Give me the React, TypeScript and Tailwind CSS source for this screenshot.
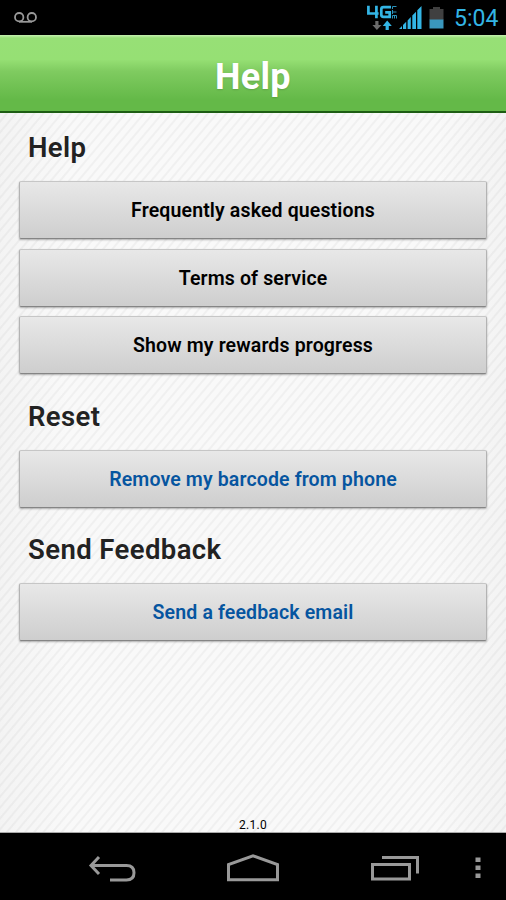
interface HelpItem {
  label: string;
  link?: boolean;
}

interface HelpSection {
  title: string;
  items: HelpItem[];
}

const sections: HelpSection[] = [
  {
    title: "Help",
    items: [
      { label: "Frequently asked questions" },
      { label: "Terms of service" },
      { label: "Show my rewards progress" },
    ],
  },
  {
    title: "Reset",
    items: [{ label: "Remove my barcode from phone", link: true }],
  },
  {
    title: "Send Feedback",
    items: [{ label: "Send a feedback email", link: true }],
  },
];

function StatusBar() {
  return (
    <div className="flex h-[35px] shrink-0 items-center bg-black pl-3.5 pr-[9px]">
      <svg width="23" height="12" viewBox="0 0 23 12" fill="none" stroke="#999" strokeWidth="1.8">
        <circle cx="5.2" cy="5.2" r="4.2" />
        <circle cx="17.8" cy="5.2" r="4.2" />
        <path d="M5 9.8H18" />
      </svg>
      <svg className="ml-auto" width="31" height="26" viewBox="0 0 31 26">
        <g fill="none" stroke="#33b5e5" strokeWidth="2.7">
          <path d="M2.4 .8v7.7H12.6M10.4 .8v12.4" />
          <path d="M25 2.2h-7.5q-2.2 0-2.2 2v5.5q0 2.1 2.2 2.1h6.2V7.3h-4.5" />
        </g>
        <g fill="none" stroke="#2b93bb" strokeWidth="1">
          <path d="M30.5 1.5H26.5V4M26 7h4.5M26.5 5v4M26.5 13.5V10.5h4V13.5M28.5 10.5v3" />
        </g>
        <path d="M9.3 16h3.2v4h3L10.9 25 6.4 20h2.9z" fill="#6b6b6b" />
        <path d="M19.6 25h3.2v-4h3L21.2 15.5 16.7 21h2.9z" fill="#33b5e5" />
      </svg>
      <svg className="ml-0.5" width="23" height="24" viewBox="0 0 23 24" fill="#33b5e5">
        <path d="M0 23 3 20V23zM4 19 7.2 15.8V23H4zM8.6 14.5 11.8 11V23H8.6zM13.3 9.5 17 5.7V23H13.3zM18.3 4.3 22.5 0V23H18.3z" />
      </svg>
      <svg className="ml-[7px]" width="15" height="22" viewBox="0 0 15 22">
        <path d="M4 0h7v2h3.5v11H.5V2H4z" fill="#404040" />
        <path d="M.5 12.5h14v9H.5z" fill="#3a97bd" />
      </svg>
      <span className="ml-2.5 w-[43px] whitespace-nowrap pt-0.5 text-[23px] leading-none text-[#33b5e5]">5:04</span>
    </div>
  );
}

function HelpButton({ label, link }: HelpItem) {
  return (
    <button
      className={`h-[58px] w-full rounded-[2px] border border-t-[#c6c6c6] border-x-[#b3b3b3] border-b-[#858585] bg-linear-to-b from-[#e8e8e8] to-[#cecece] pt-0.5 text-[19.5px] font-semibold tracking-[0.14px] shadow-[0_1px_2px_rgba(0,0,0,0.3)] ${
        link ? "text-[#0655a0]" : "text-black"
      }`}
    >
      {label}
    </button>
  );
}

function NavBar() {
  return (
    <div className="flex h-[67px] shrink-0 items-center bg-black pl-[88px] pr-[25px] pt-0.5">
      <svg width="49" height="28" viewBox="0 0 49 28" fill="none" stroke="#999" strokeWidth="3">
        <path d="M11 3 3 11.5l8 8.5M3 11.5h35.5q7.5 0 7.5 7.2t-7.5 7.2H22" />
      </svg>
      <svg className="ml-[90px]" width="52" height="28" viewBox="0 0 52 28" fill="none" stroke="#999" strokeWidth="3">
        <path d="M1.5 25.8V10.5L26 1.8 50.5 10.5v15.3z" />
      </svg>
      <svg className="ml-[92px]" width="48" height="26" viewBox="0 0 48 26" fill="none" stroke="#999" strokeWidth="3">
        <path d="M1.5 9.5h37V24h-37zM11 2.5h35.5V18.5" />
      </svg>
      <svg className="ml-auto" width="6" height="22" viewBox="0 0 6 22" fill="#999">
        <path d="M.5.5h5v4.5h-5zM.5 8.5h5V13h-5zM.5 16.5h5V21h-5z" />
      </svg>
    </div>
  );
}

export default function App() {
  return (
    <div className="flex h-[900px] w-[506px] flex-col overflow-hidden bg-black font-['Roboto',sans-serif]">
      <StatusBar />
      <header className="flex h-[78px] shrink-0 items-center justify-center border-b-2 border-[#1d5d13] bg-[linear-gradient(to_bottom,#c5efb0_0,#97e076_3px,#96e074_32%,#7fcb60_48%,#64b948_85%,#64b948)] pt-2">
        <h1 className="text-[36px] font-bold leading-none tracking-[0.3px] text-white [text-shadow:0_1px_2px_rgba(0,0,0,0.15)]">
          Help
        </h1>
      </header>
      <main className="flex flex-1 flex-col border-b border-[#aaa] bg-[linear-gradient(to_right,rgba(0,0,0,0.022),transparent_14%,transparent_86%,rgba(0,0,0,0.022)),repeating-linear-gradient(130deg,#f9f9f9_0,#f9f9f9_4px,#f0f0f0_5px,#f0f0f0_6px,#f9f9f9_7px)] px-[19px]">
        {sections.map((section) => (
          <section key={section.title} className="h-[133.3px] first:h-[268.7px]">
            <h2 className="flex h-[68px] items-center pl-[9px] pt-0.5 text-[27.5px] font-semibold tracking-[0.4px] text-[#222]">
              {section.title}
            </h2>
            <div className="flex flex-col gap-[9.5px]">
              {section.items.map((item) => (
                <HelpButton key={item.label} {...item} />
              ))}
            </div>
          </section>
        ))}
        <p className="mt-auto text-center text-[12px] leading-[14px] tracking-[0.3px] text-black">2.1.0</p>
      </main>
      <NavBar />
    </div>
  );
}
